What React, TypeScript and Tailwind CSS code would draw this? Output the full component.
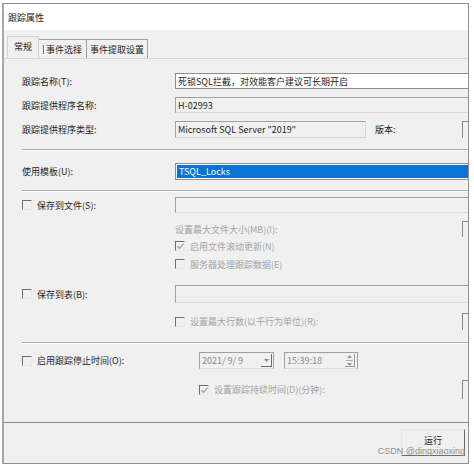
import React from "react";

type BoxProps = { checked?: boolean; disabled?: boolean };

// classic sunken checkbox
function CheckBox({ checked, disabled }: BoxProps) {
  return (
    <span className="relative inline-block h-[10px] w-[10px] shrink-0 border-l border-t border-l-[#6e6e6e] border-t-[#6e6e6e] border-b border-r border-b-[#e8e8e8] border-r-[#e8e8e8]">
      {checked && (
        <svg className="absolute left-[1px] top-[1px]" width="7" height="7" viewBox="0 0 7 7" aria-hidden="true">
          <path d="M0.5 3.2 L2.6 5.4 L6.5 0.8" fill="none" stroke={disabled ? "#9a9a9a" : "#222"} strokeWidth="1.3" />
        </svg>
      )}
    </span>
  );
}

function Sep() {
  return <div className="h-[2px] shrink-0 border-t border-b border-t-[#a8a8a8] border-b-white" />;
}

function StubBox({ h }: { h: string }) {
  return <div className={`${h} w-[6px] shrink-0 border-l border-t border-l-[#8a8a8a] border-t-[#8a8a8a]`} />;
}

export default function App() {
  return (
    <div className="h-[466px] w-[474px] bg-white pl-[2px] pt-[3px] font-['Noto_Sans_CJK_SC',sans-serif] text-[9px] leading-none text-[#1e1e1e]">
      <div className="flex h-[461px] w-[467px] flex-col overflow-hidden border border-l-2 border-[#8f8f8f] border-l-[#a8a8a8] bg-[#f0f0f0]">
        {/* title bar */}
        <div className="flex h-[26px] shrink-0 items-center bg-white pl-[4px] text-[#222]">跟踪属性</div>

        {/* tabs */}
        <div className="flex h-[28px] shrink-0 items-end pl-[3px]">
          <div className="flex h-[22px] items-center border-l border-t border-r border-[#d0d0d0] bg-[#f0f0f0] px-[6px] pb-[2px]">常规</div>
          <div className="flex h-[19px] items-center border-r border-t border-[#a0a0a0] px-[4px]">
            <span className="border-l border-[#777] pl-[2px]">事件选择</span>
          </div>
          <div className="flex h-[19px] items-center border-r border-t border-[#a0a0a0] px-[3px]">事件提取设置</div>
        </div>

        {/* tab panel */}
        <div className="flex h-[365px] shrink-0 flex-col overflow-hidden border-t border-b border-t-[#d6d6d6] border-b-[#8a8a8a] pl-[18px]">
          <div className="h-[14px] shrink-0" />
          <div className="flex h-[16px] shrink-0 items-center">
            <span className="w-[153px] shrink-0">跟踪名称(T):</span>
            <div className="-mr-[4px] flex h-[16px] flex-1 items-center border border-[#8e8e8e] bg-white pl-[2px]">
              死锁SQL拦截，对效能客户建议可长期开启
            </div>
          </div>
          <div className="h-[8px] shrink-0" />
          <div className="flex h-[16px] shrink-0 items-center">
            <span className="w-[153px] shrink-0">跟踪提供程序名称:</span>
            <div className="-mr-[4px] flex h-[16px] flex-1 items-center border border-[#a0a0a0] border-b-[#d8d8d8] pl-[2px]">
              H-02993
            </div>
          </div>
          <div className="h-[8px] shrink-0" />
          <div className="flex h-[17px] shrink-0 items-center">
            <span className="w-[153px] shrink-0">跟踪提供程序类型:</span>
            <div className="flex h-[17px] w-[191px] shrink-0 items-center border border-[#a0a0a0] border-b-[#d8d8d8] border-r-[#d8d8d8] pl-[2px]">
              Microsoft SQL Server "2019"
            </div>
            <span className="ml-[9px]">版本:</span>
            <div className="flex-1" />
            <StubBox h="h-[17px]" />
          </div>
          <div className="h-[11px] shrink-0" />
          <Sep />
          <div className="h-[12px] shrink-0" />
          <div className="flex h-[17px] shrink-0 items-center">
            <span className="w-[153px] shrink-0">使用模板(U):</span>
            <div className="-mr-[4px] flex h-[17px] flex-1 border border-[#8e8e8e] bg-white p-[1px]">
              <div className="flex flex-1 items-center bg-[#0a74d6] pl-[2px] text-white">TSQL_Locks</div>
            </div>
          </div>
          <div className="h-[10px] shrink-0" />
          <Sep />
          <div className="h-[5px] shrink-0" />

          {/* save to file */}
          <div className="flex h-[16px] shrink-0 items-center">
            <div className="flex w-[153px] shrink-0 items-center gap-[5px]">
              <CheckBox />
              <span>保存到文件(S):</span>
            </div>
            <div className="-mr-[4px] h-[16px] flex-1 border border-[#a0a0a0] border-b-[#dcdcdc]" />
          </div>
          <div className="h-[8px] shrink-0" />
          <div className="flex h-[16px] shrink-0 items-center text-[#a3a3a3]">
            <span className="w-[153px] shrink-0" />
            <span>设置最大文件大小(MB)(I):</span>
            <div className="flex-1" />
            <StubBox h="h-[16px]" />
          </div>
          <div className="flex h-[18px] shrink-0 items-center text-[#a3a3a3]">
            <span className="w-[153px] shrink-0" />
            <CheckBox checked disabled />
            <span className="ml-[5px]">启用文件滚动更新(N)</span>
          </div>
          <div className="flex h-[18px] shrink-0 items-center text-[#a3a3a3]">
            <span className="w-[153px] shrink-0" />
            <CheckBox />
            <span className="ml-[5px]">服务器处理跟踪数据(E)</span>
          </div>
          <div className="h-[12px] shrink-0" />

          {/* save to table */}
          <div className="flex h-[18px] shrink-0 items-center">
            <div className="flex w-[153px] shrink-0 items-center gap-[5px]">
              <CheckBox />
              <span>保存到表(B):</span>
            </div>
            <div className="-mr-[4px] h-[18px] flex-1 border border-[#a0a0a0] border-b-[#dcdcdc]" />
          </div>
          <div className="h-[10px] shrink-0" />
          <div className="flex h-[17px] shrink-0 items-center text-[#a3a3a3]">
            <span className="w-[153px] shrink-0" />
            <CheckBox />
            <span className="ml-[5px]">设置最大行数(以千行为单位)(R):</span>
            <div className="flex-1" />
            <StubBox h="h-[17px]" />
          </div>
          <div className="h-[12px] shrink-0" />
          <Sep />
          <div className="h-[8px] shrink-0" />

          {/* stop time */}
          <div className="flex h-[17px] shrink-0 items-center">
            <div className="flex w-[177px] shrink-0 items-center gap-[5px]">
              <CheckBox />
              <span>启用跟踪停止时间(O):</span>
            </div>
            <div className="flex h-[17px] w-[75px] shrink-0 items-center border border-[#a0a0a0] border-b-[#dcdcdc] pl-[2px] pr-[1px] text-[#8a8a8a]">
              <span className="flex-1 whitespace-pre">2021/ 9/ 9</span>
              <div className="flex h-[13px] w-[11px] items-center justify-center border-b border-r border-[#6a6a6a]">
                <svg width="5" height="3" viewBox="0 0 5 3" aria-hidden="true">
                  <path d="M0 0 L5 0 L2.5 3 Z" fill="#8a8a8a" />
                </svg>
              </div>
            </div>
            <div className="ml-[10px] flex h-[17px] w-[74px] shrink-0 items-center border border-[#a0a0a0] border-b-[#dcdcdc] pl-[2px] pr-[2px] text-[#8a8a8a]">
              <span className="flex-1">15:39:18</span>
              <div className="flex h-[13px] w-[10px] flex-col items-center justify-center gap-[2px] border-b border-r border-[#9a9a9a]">
                <svg width="5" height="3" viewBox="0 0 5 3" aria-hidden="true">
                  <path d="M0 3 L5 3 L2.5 0 Z" fill="#9a9a9a" />
                </svg>
                <div className="h-px w-[7px] bg-[#b0b0b0]" />
                <svg width="5" height="3" viewBox="0 0 5 3" aria-hidden="true">
                  <path d="M0 0 L5 0 L2.5 3 Z" fill="#9a9a9a" />
                </svg>
              </div>
            </div>
          </div>
          <div className="h-[11px] shrink-0" />
          <div className="flex h-[19px] shrink-0 items-center text-[#a3a3a3]">
            <span className="w-[177px] shrink-0" />
            <CheckBox checked disabled />
            <span className="ml-[5px]">设置跟踪持续时间(D)(分钟):</span>
            <div className="flex-1" />
            <StubBox h="h-[19px]" />
          </div>
        </div>

        {/* footer */}
        <div className="relative flex flex-1 items-start justify-end pr-[3px] pt-[6px]">
          <button className="flex h-[27px] w-[64px] items-start justify-center border border-t-[#e6e6e6] border-l-[#e6e6e6] border-b-[#6a6a6a] border-r-[#6a6a6a] bg-[#f0f0f0] pt-[6px] text-[9px] text-[#1e1e1e]">
            运行
          </button>
          <span className="absolute bottom-[7px] right-[3px] font-['Liberation_Sans',sans-serif] text-[9px] text-[#8e8e8e]">
            CSDN @dingxiaoxing
          </span>
        </div>
      </div>
    </div>
  );
}
